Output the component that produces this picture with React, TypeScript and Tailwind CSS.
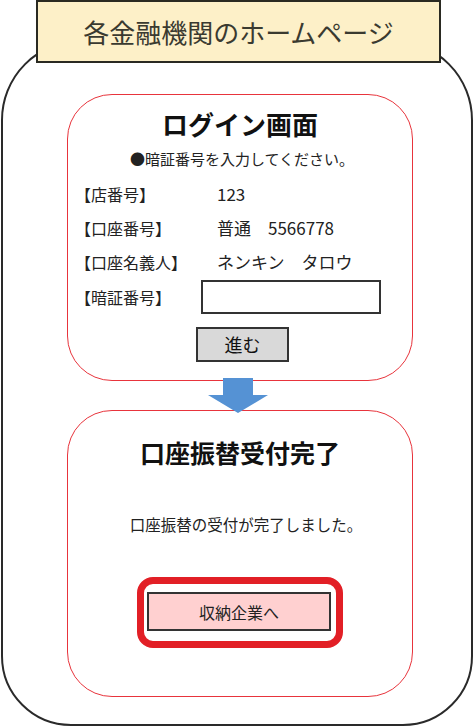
import React from "react";

const font = { fontFamily: '"Noto Sans CJK JP", "Noto Sans", sans-serif' };

function Row({ label, value }: { label: string; value: string }) {
  return (
    <div className="flex h-[34px] items-center text-[16px] text-[#222]">
      <span className="w-[142px] shrink-0 whitespace-nowrap">{label}</span>
      <span className="whitespace-pre text-[17px]">{value}</span>
    </div>
  );
}

export default function App() {
  return (
    <div
      className="flex h-[727px] w-[474px] flex-col items-start overflow-hidden bg-white"
      style={font}
    >
      <div className="relative z-10 ml-[36px] flex h-[63px] w-[405px] items-center justify-center border-2 border-[#2a2a22] bg-[#fdf0c8] text-[26px] text-[#3a3a30]">
        各金融機関のホームページ
      </div>
      <div className="-mt-[23px] ml-[1px] flex h-[686px] w-[472px] flex-col items-start rounded-t-[80px] rounded-b-[70px] border-2 border-[#2a2a2a] pl-[64px] pt-[52px]">
        {/* Login card */}
        <div className="flex h-[287px] w-[346px] flex-col rounded-[45px] border-[1.5px] border-[#e8343c] pt-[14px]">
          <div className="text-center text-[26px] font-bold leading-[30px] text-[#111]">
            ログイン画面
          </div>
          <div className="mt-[10px] pl-[4px] text-center text-[15px] leading-[20px] text-[#222]">
            ●暗証番号を入力してください。
          </div>
          <div className="mt-[8px] flex flex-col pl-[7px]">
            <Row label="【店番号】" value="123" />
            <Row label="【口座番号】" value="普通　5566778" />
            <Row label="【口座名義人】" value="ネンキン　タロウ" />
            <div className="flex h-[36px] items-center text-[16px] text-[#222]">
              <span className="w-[126px] shrink-0 whitespace-nowrap">【暗証番号】</span>
              <div className="h-[34px] w-[180px] border-2 border-[#333] bg-white" />
            </div>
          </div>
          <div className="ml-[128px] mt-[12px] flex h-[35px] w-[93px] items-center justify-center border-2 border-[#333] bg-[#d9d9d9] text-[18px] text-[#111]">
            進む
          </div>
        </div>
        {/* Arrow */}
        <svg
          width="60"
          height="35"
          viewBox="0 0 60 35"
          className="relative z-10 -my-[3px] ml-[141px]"
        >
          <path d="M15 0 H45 V17 H60 L30 35 L0 17 H15 Z" fill="#5592d4" />
        </svg>
        {/* Completion card */}
        <div className="flex h-[287px] w-[346px] flex-col items-center rounded-[45px] border-[1.5px] border-[#e8343c] pt-[26px]">
          <div className="text-center text-[25px] font-bold leading-[30px] text-[#111]">
            口座振替受付完了
          </div>
          <div className="ml-[12px] mt-[47px] text-center text-[15.5px] leading-[20px] text-[#222]">
            口座振替の受付が完了しました。
          </div>
          <div className="mt-[43px] flex h-[71px] w-[206px] flex-col items-start rounded-[16px] border-[7px] border-[#e21f26] pl-[3px] pt-[8px]">
            <div className="flex h-[39px] w-[184px] items-center justify-center border-2 border-[#333] bg-[#ffd0d0] text-[16px] text-[#222]">
              収納企業へ
            </div>
          </div>
        </div>
      </div>
    </div>
  );
}
